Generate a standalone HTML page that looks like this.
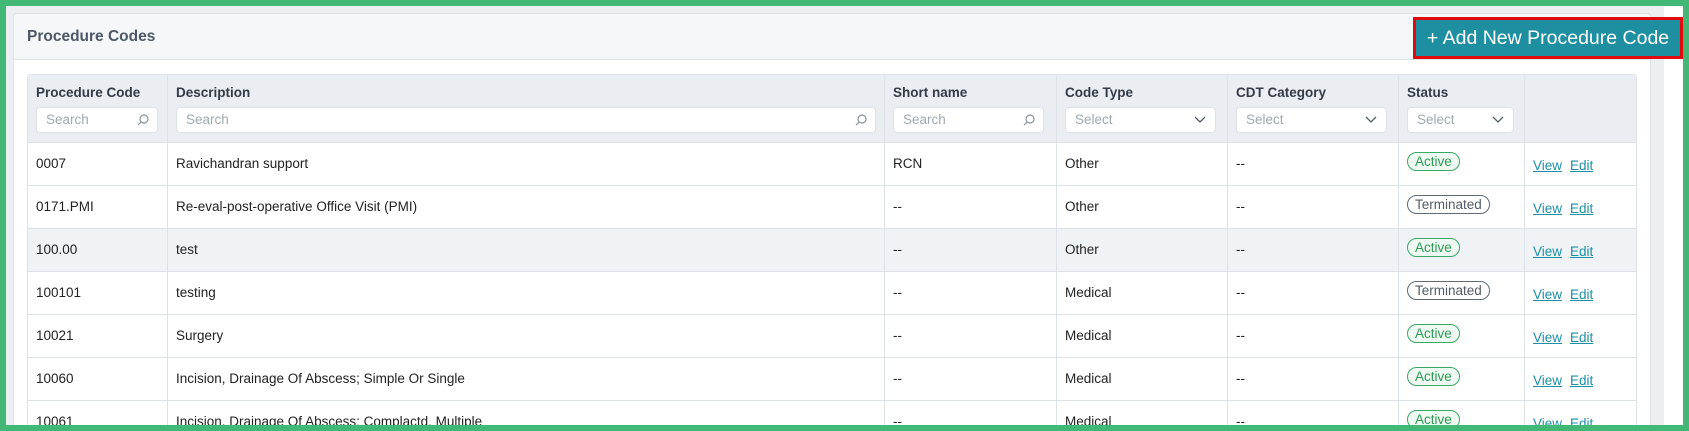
<!DOCTYPE html>
<html><head><meta charset="utf-8"><style>
*{box-sizing:border-box;margin:0;padding:0}
body{width:1689px;height:431px;overflow:hidden;background:#41b875;font-family:"Liberation Sans",Arial,sans-serif;position:relative}
.abs{position:absolute}
#frame{left:6px;top:6px;width:1677px;height:419px;background:#eceff2;overflow:hidden}
#white{left:1658px;top:0;width:19px;height:419px;background:#fff}
#card{left:7px;top:7px;width:1638px;height:430px;background:#fff;border:1px solid #dde2e8;border-radius:4px;overflow:hidden}
#hdr{left:0;top:0;width:1636px;height:46px;background:#f6f7f9;border-bottom:1px solid #dde2e8}
#hdr span{position:absolute;left:13px;top:14px;font-size:15.5px;font-weight:bold;color:#4d5866}
#btn{left:1407px;top:11px;width:270px;height:42px;border:3px solid #e00c0c;background:#1e8fa0;color:#fff;font-size:19.5px;line-height:36px;text-align:center;white-space:nowrap}
#tbl{left:13px;top:60px;width:1610px;height:400px;border:1px solid #dde2e8;border-radius:4px 4px 0 0;overflow:hidden}
.th{position:absolute;top:0;height:68px;background:#eaedf1;border-right:1px solid #dde2e8;border-bottom:1px solid #dde2e8}
.th b{position:absolute;left:8px;top:10px;font-size:13.5px;color:#333b47}
.inp{position:absolute;left:8px;top:32px;height:26px;background:#fff;border:1px solid #dde2e8;border-radius:4px;font-size:13.5px;color:#a0a8b3;padding-left:9px;line-height:24px}
.inp svg{position:absolute;right:8px;top:6px}
.row{position:absolute;left:0;width:1610px;height:43px;border-bottom:1px solid #dde2e8}
.c{position:absolute;top:0;height:43px;border-right:1px solid #dde2e8;font-size:13.5px;color:#222;line-height:42px;padding-left:8px;white-space:nowrap}
.badge{display:inline-block;height:19px;line-height:17px;border-radius:10px;font-size:13.5px;padding:0 7px;vertical-align:top;margin-top:9px}
.act{border:1px solid #3aa865;color:#2e9a57;background:#eefaf2}
.term{border:1px solid #5e6a78;color:#525c68;background:#fff}
.lnk{color:#1d8fa6;text-decoration:underline;margin-right:8px}
</style></head><body>
<div id="frame" class="abs">
<div id="white" class="abs"></div>
<div id="card" class="abs">
<div id="hdr" class="abs"><span>Procedure Codes</span></div>
<div id="tbl" class="abs">
<div class="th" style="left:0;width:140px"><b>Procedure Code</b><div class="inp" style="width:122px">Search<svg width="12" height="12" viewBox="0 0 12 12"><circle cx="7" cy="5" r="4" fill="none" stroke="#8a939e" stroke-width="1.2"/><path d="M4 8L1 11" stroke="#8a939e" stroke-width="1.2"/></svg></div></div>
<div class="th" style="left:140px;width:717px"><b>Description</b><div class="inp" style="width:700px">Search<svg width="12" height="12" viewBox="0 0 12 12"><circle cx="7" cy="5" r="4" fill="none" stroke="#8a939e" stroke-width="1.2"/><path d="M4 8L1 11" stroke="#8a939e" stroke-width="1.2"/></svg></div></div>
<div class="th" style="left:857px;width:172px"><b>Short name</b><div class="inp" style="width:151px">Search<svg width="12" height="12" viewBox="0 0 12 12"><circle cx="7" cy="5" r="4" fill="none" stroke="#8a939e" stroke-width="1.2"/><path d="M4 8L1 11" stroke="#8a939e" stroke-width="1.2"/></svg></div></div>
<div class="th" style="left:1029px;width:171px"><b>Code Type</b><div class="inp" style="width:151px">Select<svg width="14" height="10" viewBox="0 0 14 10"><path d="M2 3l5 5 5-5" fill="none" stroke="#555f6b" stroke-width="1.3"/></svg></div></div>
<div class="th" style="left:1200px;width:171px"><b>CDT Category</b><div class="inp" style="width:151px">Select<svg width="14" height="10" viewBox="0 0 14 10"><path d="M2 3l5 5 5-5" fill="none" stroke="#555f6b" stroke-width="1.3"/></svg></div></div>
<div class="th" style="left:1371px;width:126px"><b>Status</b><div class="inp" style="width:107px">Select<svg width="14" height="10" viewBox="0 0 14 10"><path d="M2 3l5 5 5-5" fill="none" stroke="#555f6b" stroke-width="1.3"/></svg></div></div>
<div class="th" style="left:1497px;width:113px;border-right:none"></div>

<div class="row" style="top:68px"><div class="c" style="left:0;width:140px">0007</div><div class="c" style="left:140px;width:717px">Ravichandran support</div><div class="c" style="left:857px;width:172px">RCN</div><div class="c" style="left:1029px;width:171px">Other</div><div class="c" style="left:1200px;width:171px">--</div><div class="c" style="left:1371px;width:126px"><span class="badge act">Active</span></div><div class="c" style="left:1497px;width:113px;border:none;padding-top:2px"><span class="lnk">View</span><span class="lnk">Edit</span></div></div>
<div class="row" style="top:111px"><div class="c" style="left:0;width:140px">0171.PMI</div><div class="c" style="left:140px;width:717px">Re-eval-post-operative Office Visit (PMI)</div><div class="c" style="left:857px;width:172px">--</div><div class="c" style="left:1029px;width:171px">Other</div><div class="c" style="left:1200px;width:171px">--</div><div class="c" style="left:1371px;width:126px"><span class="badge term">Terminated</span></div><div class="c" style="left:1497px;width:113px;border:none;padding-top:2px"><span class="lnk">View</span><span class="lnk">Edit</span></div></div>
<div class="row" style="top:154px;background:#f0f3f6"><div class="c" style="left:0;width:140px">100.00</div><div class="c" style="left:140px;width:717px">test</div><div class="c" style="left:857px;width:172px">--</div><div class="c" style="left:1029px;width:171px">Other</div><div class="c" style="left:1200px;width:171px">--</div><div class="c" style="left:1371px;width:126px"><span class="badge act">Active</span></div><div class="c" style="left:1497px;width:113px;border:none;padding-top:2px"><span class="lnk">View</span><span class="lnk">Edit</span></div></div>
<div class="row" style="top:197px"><div class="c" style="left:0;width:140px">100101</div><div class="c" style="left:140px;width:717px">testing</div><div class="c" style="left:857px;width:172px">--</div><div class="c" style="left:1029px;width:171px">Medical</div><div class="c" style="left:1200px;width:171px">--</div><div class="c" style="left:1371px;width:126px"><span class="badge term">Terminated</span></div><div class="c" style="left:1497px;width:113px;border:none;padding-top:2px"><span class="lnk">View</span><span class="lnk">Edit</span></div></div>
<div class="row" style="top:240px"><div class="c" style="left:0;width:140px">10021</div><div class="c" style="left:140px;width:717px">Surgery</div><div class="c" style="left:857px;width:172px">--</div><div class="c" style="left:1029px;width:171px">Medical</div><div class="c" style="left:1200px;width:171px">--</div><div class="c" style="left:1371px;width:126px"><span class="badge act">Active</span></div><div class="c" style="left:1497px;width:113px;border:none;padding-top:2px"><span class="lnk">View</span><span class="lnk">Edit</span></div></div>
<div class="row" style="top:283px"><div class="c" style="left:0;width:140px">10060</div><div class="c" style="left:140px;width:717px">Incision, Drainage Of Abscess; Simple Or Single</div><div class="c" style="left:857px;width:172px">--</div><div class="c" style="left:1029px;width:171px">Medical</div><div class="c" style="left:1200px;width:171px">--</div><div class="c" style="left:1371px;width:126px"><span class="badge act">Active</span></div><div class="c" style="left:1497px;width:113px;border:none;padding-top:2px"><span class="lnk">View</span><span class="lnk">Edit</span></div></div>
<div class="row" style="top:326px"><div class="c" style="left:0;width:140px">10061</div><div class="c" style="left:140px;width:717px">Incision, Drainage Of Abscess; Complactd, Multiple</div><div class="c" style="left:857px;width:172px">--</div><div class="c" style="left:1029px;width:171px">Medical</div><div class="c" style="left:1200px;width:171px">--</div><div class="c" style="left:1371px;width:126px"><span class="badge act">Active</span></div><div class="c" style="left:1497px;width:113px;border:none;padding-top:2px"><span class="lnk">View</span><span class="lnk">Edit</span></div></div>
</div>
</div>
<div id="btn" class="abs">+ Add New Procedure Code</div>
</div>
</body></html>
